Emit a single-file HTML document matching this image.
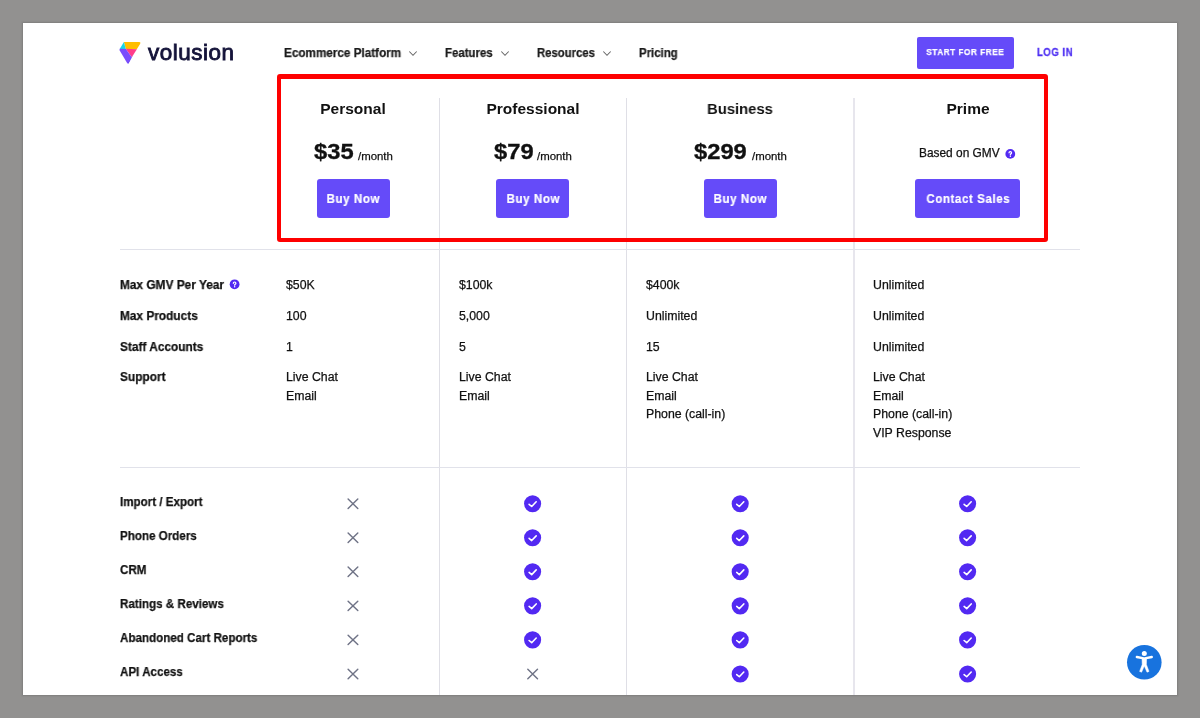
<!DOCTYPE html>
<html><head><meta charset="utf-8">
<style>
*{margin:0;padding:0;box-sizing:border-box}
html,body{width:1200px;height:718px;overflow:hidden;background:#929190;font-family:"Liberation Sans",sans-serif;color:#111}
.t{position:absolute;white-space:nowrap;will-change:transform;-webkit-text-stroke:0.25px currentColor}
.r{position:absolute}
svg.r{display:block;overflow:visible}
</style></head><body>
<div class="r" style="left:23px;top:23px;width:1154px;height:672px;background:#fff;box-shadow:0 0 1.5px 1px rgba(60,60,60,0.22);"></div>
<svg class="r" style="left:117px;top:39px" width="26" height="27" viewBox="117 39 26 27">
<path d="M123.9 41.9 L139.3 41.9 Q141 42.1 140.2 43.7 L136.8 49.3 L125.8 48.9 Z" fill="#ffbe00"/>
<path d="M123.9 41.9 L119.7 48.9 L125.8 48.9 Z" fill="#16d6e6"/>
<path d="M125.7 48.8 L136.9 49.2 L131.8 57.2 Z" fill="#ff3d8b"/>
<path d="M119.8 48.8 L125.9 48.9 L131.8 57.2 L128.7 62.9 Q127.9 64 127.1 62.9 L119.7 50.4 Q119.3 49.5 119.8 48.8 Z" fill="#7a4cfc"/>
<path d="M131.8 57.1 L132.9 55.4 L128.7 62.9 Q128.2 63.6 127.8 63.4 Z" fill="#5a3af2"/>
</svg>
<div class="t " style="left:147.6px;top:42.18px;font-size:22px;line-height:22px;font-weight:normal;color:#15143a;letter-spacing:0.5px;-webkit-text-stroke:0.85px #15143a;transform:scaleX(1.02);transform-origin:0 0;">volusion</div>
<div class="t " style="left:284.2px;top:46.67px;font-size:12.2px;line-height:12.2px;font-weight:bold;color:#1b1b1b;transform:scaleX(0.961);transform-origin:0 0;">Ecommerce Platform</div>
<svg class="r" style="left:409.2px;top:50.5px" width="8" height="5" viewBox="0 0 8 5"><path d="M0.3 0.5 L4 4.3 L7.7 0.5" fill="none" stroke="#666" stroke-width="1.05"/></svg>
<div class="t " style="left:445.2px;top:46.67px;font-size:12.2px;line-height:12.2px;font-weight:bold;color:#1b1b1b;transform:scaleX(0.938);transform-origin:0 0;">Features</div>
<svg class="r" style="left:501.2px;top:50.5px" width="8" height="5" viewBox="0 0 8 5"><path d="M0.3 0.5 L4 4.3 L7.7 0.5" fill="none" stroke="#666" stroke-width="1.05"/></svg>
<div class="t " style="left:537.3px;top:46.67px;font-size:12.2px;line-height:12.2px;font-weight:bold;color:#1b1b1b;transform:scaleX(0.930);transform-origin:0 0;">Resources</div>
<svg class="r" style="left:603.0px;top:50.5px" width="8" height="5" viewBox="0 0 8 5"><path d="M0.3 0.5 L4 4.3 L7.7 0.5" fill="none" stroke="#666" stroke-width="1.05"/></svg>
<div class="t " style="left:639.1px;top:46.67px;font-size:12.2px;line-height:12.2px;font-weight:bold;color:#1b1b1b;transform:scaleX(0.937);transform-origin:0 0;">Pricing</div>
<div class="r" style="left:916.5px;top:36.5px;width:97.5px;height:32px;background:#654bf9;border-radius:2px;"></div>
<div class="t " style="left:665.2px;width:600px;text-align:center;top:47.44px;font-size:9.4px;line-height:9.4px;font-weight:bold;color:#fff;letter-spacing:0.57px;text-indent:0.57px;-webkit-text-stroke:0.25px #fff;transform:scaleX(0.88);">START FOR FREE</div>
<div class="t " style="left:1037.0px;top:47.11px;font-size:10.5px;line-height:10.5px;font-weight:bold;color:#4e30f2;letter-spacing:0.66px;-webkit-text-stroke:0.3px #4e30f2;transform:scaleX(0.9);transform-origin:0 0;">LOG IN</div>
<div class="r" style="left:439px;top:98px;width:1px;height:597px;background:#dfdfe6;"></div>
<div class="r" style="left:626px;top:98px;width:1px;height:597px;background:#dfdfe6;"></div>
<div class="r" style="left:853px;top:98px;width:2px;height:597px;background:#e7e6ed;"></div>
<div class="r" style="left:120px;top:249px;width:960px;height:1px;background:#e1e2ea;"></div>
<div class="r" style="left:120px;top:467px;width:960px;height:1px;background:#e1e2ea;"></div>
<div class="t " style="left:53.39999999999998px;width:600px;text-align:center;top:100.78px;font-size:15.5px;line-height:15.5px;font-weight:bold;color:#111;-webkit-text-stroke:0;transform:scaleX(1.0);">Personal</div>
<div class="t " style="left:232.5px;width:600px;text-align:center;top:100.78px;font-size:15.5px;line-height:15.5px;font-weight:bold;color:#111;-webkit-text-stroke:0;transform:scaleX(1.0);">Professional</div>
<div class="t " style="left:440px;width:600px;text-align:center;top:100.78px;font-size:15.5px;line-height:15.5px;font-weight:bold;color:#111;-webkit-text-stroke:0;transform:scaleX(0.955);">Business</div>
<div class="t " style="left:667.5px;width:600px;text-align:center;top:100.78px;font-size:15.5px;line-height:15.5px;font-weight:bold;color:#111;-webkit-text-stroke:0;transform:scaleX(1.0);">Prime</div>
<div class="t " style="left:314.2px;top:141.15px;font-size:21.2px;line-height:21.2px;font-weight:bold;color:#111;transform:scaleX(1.12);transform-origin:0 0;-webkit-text-stroke:0.3px #111;">$35</div>
<div class="t " style="left:357.7px;top:151.05px;font-size:11.4px;line-height:11.4px;font-weight:normal;color:#111;">/month</div>
<div class="t " style="left:493.6px;top:141.15px;font-size:21.2px;line-height:21.2px;font-weight:bold;color:#111;transform:scaleX(1.12);transform-origin:0 0;-webkit-text-stroke:0.3px #111;">$79</div>
<div class="t " style="left:536.6999999999999px;top:151.05px;font-size:11.4px;line-height:11.4px;font-weight:normal;color:#111;">/month</div>
<div class="t " style="left:694.1px;top:141.15px;font-size:21.2px;line-height:21.2px;font-weight:bold;color:#111;transform:scaleX(1.12);transform-origin:0 0;-webkit-text-stroke:0.3px #111;">$299</div>
<div class="t " style="left:751.6999999999999px;top:151.05px;font-size:11.4px;line-height:11.4px;font-weight:normal;color:#111;">/month</div>
<div class="t " style="left:918.8000000000001px;top:147.93px;font-size:11.9px;line-height:11.9px;font-weight:normal;color:#111;">Based on GMV</div>
<div class="r" style="left:316.9px;top:179px;width:73px;height:39px;background:#654bf9;border-radius:3px;"></div>
<div class="t " style="left:53.39999999999998px;width:600px;text-align:center;top:193.12px;font-size:12.5px;line-height:12.5px;font-weight:bold;color:#fff;letter-spacing:0.65px;text-indent:0.65px;-webkit-text-stroke:0.2px #fff;transform:scaleX(0.92);">Buy Now</div>
<div class="r" style="left:496.0px;top:179px;width:73px;height:39px;background:#654bf9;border-radius:3px;"></div>
<div class="t " style="left:232.5px;width:600px;text-align:center;top:193.12px;font-size:12.5px;line-height:12.5px;font-weight:bold;color:#fff;letter-spacing:0.65px;text-indent:0.65px;-webkit-text-stroke:0.2px #fff;transform:scaleX(0.92);">Buy Now</div>
<div class="r" style="left:703.5px;top:179px;width:73px;height:39px;background:#654bf9;border-radius:3px;"></div>
<div class="t " style="left:440px;width:600px;text-align:center;top:193.12px;font-size:12.5px;line-height:12.5px;font-weight:bold;color:#fff;letter-spacing:0.65px;text-indent:0.65px;-webkit-text-stroke:0.2px #fff;transform:scaleX(0.92);">Buy Now</div>
<div class="r" style="left:915.0px;top:179px;width:105px;height:39px;background:#654bf9;border-radius:3px;"></div>
<div class="t " style="left:667.5px;width:600px;text-align:center;top:193.12px;font-size:12.5px;line-height:12.5px;font-weight:bold;color:#fff;letter-spacing:0.65px;text-indent:0.65px;-webkit-text-stroke:0.2px #fff;transform:scaleX(0.92);">Contact Sales</div>
<svg class="r" style="left:1003px;top:146px" width="14" height="14" viewBox="0 0 14 14"><g transform="translate(2.40,3.00) scale(0.490)"><circle cx="10" cy="10" r="10" fill="#5229f2"/><path d="M7.4 7.9 Q7.4 5.3 10 5.3 Q12.6 5.3 12.6 7.7 Q12.6 9.1 11.2 9.9 Q10.1 10.5 10.1 11.8" fill="none" stroke="#fff" stroke-width="2.5" stroke-linecap="round"/><circle cx="10.1" cy="14.9" r="1.5" fill="#fff"/></g></svg>
<div class="t " style="left:120.3px;top:278.65px;font-size:12.7px;line-height:12.7px;font-weight:bold;color:#111;transform:scaleX(0.935);transform-origin:0 0;">Max GMV Per Year</div>
<div class="t " style="left:286.3px;top:278.59px;font-size:12.3px;line-height:12.3px;font-weight:normal;color:#111;">$50K</div>
<div class="t " style="left:459.3px;top:278.59px;font-size:12.3px;line-height:12.3px;font-weight:normal;color:#111;">$100k</div>
<div class="t " style="left:646.3px;top:278.59px;font-size:12.3px;line-height:12.3px;font-weight:normal;color:#111;">$400k</div>
<div class="t " style="left:873.3px;top:278.59px;font-size:12.3px;line-height:12.3px;font-weight:normal;color:#111;">Unlimited</div>
<div class="t " style="left:120.3px;top:309.65px;font-size:12.7px;line-height:12.7px;font-weight:bold;color:#111;transform:scaleX(0.935);transform-origin:0 0;">Max Products</div>
<div class="t " style="left:286.3px;top:309.59px;font-size:12.3px;line-height:12.3px;font-weight:normal;color:#111;">100</div>
<div class="t " style="left:459.3px;top:309.59px;font-size:12.3px;line-height:12.3px;font-weight:normal;color:#111;">5,000</div>
<div class="t " style="left:646.3px;top:309.59px;font-size:12.3px;line-height:12.3px;font-weight:normal;color:#111;">Unlimited</div>
<div class="t " style="left:873.3px;top:309.59px;font-size:12.3px;line-height:12.3px;font-weight:normal;color:#111;">Unlimited</div>
<div class="t " style="left:120.3px;top:340.65px;font-size:12.7px;line-height:12.7px;font-weight:bold;color:#111;transform:scaleX(0.935);transform-origin:0 0;">Staff Accounts</div>
<div class="t " style="left:286.3px;top:340.59px;font-size:12.3px;line-height:12.3px;font-weight:normal;color:#111;">1</div>
<div class="t " style="left:459.3px;top:340.59px;font-size:12.3px;line-height:12.3px;font-weight:normal;color:#111;">5</div>
<div class="t " style="left:646.3px;top:340.59px;font-size:12.3px;line-height:12.3px;font-weight:normal;color:#111;">15</div>
<div class="t " style="left:873.3px;top:340.59px;font-size:12.3px;line-height:12.3px;font-weight:normal;color:#111;">Unlimited</div>
<div class="t " style="left:120.3px;top:371.15px;font-size:12.7px;line-height:12.7px;font-weight:bold;color:#111;transform:scaleX(0.935);transform-origin:0 0;">Support</div>
<div class="t " style="left:286.3px;top:371.09px;font-size:12.3px;line-height:12.3px;font-weight:normal;color:#111;">Live Chat</div>
<div class="t " style="left:286.3px;top:389.59px;font-size:12.3px;line-height:12.3px;font-weight:normal;color:#111;">Email</div>
<div class="t " style="left:459.3px;top:371.09px;font-size:12.3px;line-height:12.3px;font-weight:normal;color:#111;">Live Chat</div>
<div class="t " style="left:459.3px;top:389.59px;font-size:12.3px;line-height:12.3px;font-weight:normal;color:#111;">Email</div>
<div class="t " style="left:646.3px;top:371.09px;font-size:12.3px;line-height:12.3px;font-weight:normal;color:#111;">Live Chat</div>
<div class="t " style="left:646.3px;top:389.59px;font-size:12.3px;line-height:12.3px;font-weight:normal;color:#111;">Email</div>
<div class="t " style="left:646.3px;top:408.09px;font-size:12.3px;line-height:12.3px;font-weight:normal;color:#111;">Phone (call-in)</div>
<div class="t " style="left:873.3px;top:371.09px;font-size:12.3px;line-height:12.3px;font-weight:normal;color:#111;">Live Chat</div>
<div class="t " style="left:873.3px;top:389.59px;font-size:12.3px;line-height:12.3px;font-weight:normal;color:#111;">Email</div>
<div class="t " style="left:873.3px;top:408.09px;font-size:12.3px;line-height:12.3px;font-weight:normal;color:#111;">Phone (call-in)</div>
<div class="t " style="left:873.3px;top:426.59px;font-size:12.3px;line-height:12.3px;font-weight:normal;color:#111;">VIP Response</div>
<svg class="r" style="left:227px;top:277px" width="14" height="14" viewBox="0 0 14 14"><g transform="translate(2.70,2.40) scale(0.490)"><circle cx="10" cy="10" r="10" fill="#5229f2"/><path d="M7.4 7.9 Q7.4 5.3 10 5.3 Q12.6 5.3 12.6 7.7 Q12.6 9.1 11.2 9.9 Q10.1 10.5 10.1 11.8" fill="none" stroke="#fff" stroke-width="2.5" stroke-linecap="round"/><circle cx="10.1" cy="14.9" r="1.5" fill="#fff"/></g></svg>
<div class="t " style="left:120.3px;top:495.65px;font-size:12.7px;line-height:12.7px;font-weight:bold;color:#111;transform:scaleX(0.915);transform-origin:0 0;">Import / Export</div>
<svg class="r" style="left:344px;top:495px" width="16" height="16" viewBox="0 0 16 16"><g transform="translate(2.90,2.70)"><path d="M1.2 1.3 L10.9 10.7 M10.9 1.3 L1.2 10.7" stroke="#6f7386" stroke-width="1.45" stroke-linecap="round"/></g></svg>
<svg class="r" style="left:522px;top:493px" width="20" height="20" viewBox="0 0 20 20"><g transform="translate(2.10,2.20)"><circle cx="8.5" cy="8.5" r="8.55" fill="#5229f2"/><path d="M5.0 9.1 L7.6 11.3 L12.1 6.6" fill="none" stroke="#fff" stroke-width="1.6" stroke-linecap="round" stroke-linejoin="round"/></g></svg>
<svg class="r" style="left:730px;top:493px" width="20" height="20" viewBox="0 0 20 20"><g transform="translate(1.70,2.20)"><circle cx="8.5" cy="8.5" r="8.55" fill="#5229f2"/><path d="M5.0 9.1 L7.6 11.3 L12.1 6.6" fill="none" stroke="#fff" stroke-width="1.6" stroke-linecap="round" stroke-linejoin="round"/></g></svg>
<svg class="r" style="left:957px;top:493px" width="20" height="20" viewBox="0 0 20 20"><g transform="translate(2.10,2.20)"><circle cx="8.5" cy="8.5" r="8.55" fill="#5229f2"/><path d="M5.0 9.1 L7.6 11.3 L12.1 6.6" fill="none" stroke="#fff" stroke-width="1.6" stroke-linecap="round" stroke-linejoin="round"/></g></svg>
<div class="t " style="left:120.3px;top:529.75px;font-size:12.7px;line-height:12.7px;font-weight:bold;color:#111;transform:scaleX(0.915);transform-origin:0 0;">Phone Orders</div>
<svg class="r" style="left:344px;top:529px" width="16" height="16" viewBox="0 0 16 16"><g transform="translate(2.90,2.75)"><path d="M1.2 1.3 L10.9 10.7 M10.9 1.3 L1.2 10.7" stroke="#6f7386" stroke-width="1.45" stroke-linecap="round"/></g></svg>
<svg class="r" style="left:522px;top:527px" width="20" height="20" viewBox="0 0 20 20"><g transform="translate(2.10,2.25)"><circle cx="8.5" cy="8.5" r="8.55" fill="#5229f2"/><path d="M5.0 9.1 L7.6 11.3 L12.1 6.6" fill="none" stroke="#fff" stroke-width="1.6" stroke-linecap="round" stroke-linejoin="round"/></g></svg>
<svg class="r" style="left:730px;top:527px" width="20" height="20" viewBox="0 0 20 20"><g transform="translate(1.70,2.25)"><circle cx="8.5" cy="8.5" r="8.55" fill="#5229f2"/><path d="M5.0 9.1 L7.6 11.3 L12.1 6.6" fill="none" stroke="#fff" stroke-width="1.6" stroke-linecap="round" stroke-linejoin="round"/></g></svg>
<svg class="r" style="left:957px;top:527px" width="20" height="20" viewBox="0 0 20 20"><g transform="translate(2.10,2.25)"><circle cx="8.5" cy="8.5" r="8.55" fill="#5229f2"/><path d="M5.0 9.1 L7.6 11.3 L12.1 6.6" fill="none" stroke="#fff" stroke-width="1.6" stroke-linecap="round" stroke-linejoin="round"/></g></svg>
<div class="t " style="left:120.3px;top:563.85px;font-size:12.7px;line-height:12.7px;font-weight:bold;color:#111;transform:scaleX(0.915);transform-origin:0 0;">CRM</div>
<svg class="r" style="left:344px;top:563px" width="16" height="16" viewBox="0 0 16 16"><g transform="translate(2.90,2.80)"><path d="M1.2 1.3 L10.9 10.7 M10.9 1.3 L1.2 10.7" stroke="#6f7386" stroke-width="1.45" stroke-linecap="round"/></g></svg>
<svg class="r" style="left:522px;top:561px" width="20" height="20" viewBox="0 0 20 20"><g transform="translate(2.10,2.30)"><circle cx="8.5" cy="8.5" r="8.55" fill="#5229f2"/><path d="M5.0 9.1 L7.6 11.3 L12.1 6.6" fill="none" stroke="#fff" stroke-width="1.6" stroke-linecap="round" stroke-linejoin="round"/></g></svg>
<svg class="r" style="left:730px;top:561px" width="20" height="20" viewBox="0 0 20 20"><g transform="translate(1.70,2.30)"><circle cx="8.5" cy="8.5" r="8.55" fill="#5229f2"/><path d="M5.0 9.1 L7.6 11.3 L12.1 6.6" fill="none" stroke="#fff" stroke-width="1.6" stroke-linecap="round" stroke-linejoin="round"/></g></svg>
<svg class="r" style="left:957px;top:561px" width="20" height="20" viewBox="0 0 20 20"><g transform="translate(2.10,2.30)"><circle cx="8.5" cy="8.5" r="8.55" fill="#5229f2"/><path d="M5.0 9.1 L7.6 11.3 L12.1 6.6" fill="none" stroke="#fff" stroke-width="1.6" stroke-linecap="round" stroke-linejoin="round"/></g></svg>
<div class="t " style="left:120.3px;top:597.95px;font-size:12.7px;line-height:12.7px;font-weight:bold;color:#111;transform:scaleX(0.915);transform-origin:0 0;">Ratings & Reviews</div>
<svg class="r" style="left:344px;top:597px" width="16" height="16" viewBox="0 0 16 16"><g transform="translate(2.90,2.85)"><path d="M1.2 1.3 L10.9 10.7 M10.9 1.3 L1.2 10.7" stroke="#6f7386" stroke-width="1.45" stroke-linecap="round"/></g></svg>
<svg class="r" style="left:522px;top:595px" width="20" height="20" viewBox="0 0 20 20"><g transform="translate(2.10,2.35)"><circle cx="8.5" cy="8.5" r="8.55" fill="#5229f2"/><path d="M5.0 9.1 L7.6 11.3 L12.1 6.6" fill="none" stroke="#fff" stroke-width="1.6" stroke-linecap="round" stroke-linejoin="round"/></g></svg>
<svg class="r" style="left:730px;top:595px" width="20" height="20" viewBox="0 0 20 20"><g transform="translate(1.70,2.35)"><circle cx="8.5" cy="8.5" r="8.55" fill="#5229f2"/><path d="M5.0 9.1 L7.6 11.3 L12.1 6.6" fill="none" stroke="#fff" stroke-width="1.6" stroke-linecap="round" stroke-linejoin="round"/></g></svg>
<svg class="r" style="left:957px;top:595px" width="20" height="20" viewBox="0 0 20 20"><g transform="translate(2.10,2.35)"><circle cx="8.5" cy="8.5" r="8.55" fill="#5229f2"/><path d="M5.0 9.1 L7.6 11.3 L12.1 6.6" fill="none" stroke="#fff" stroke-width="1.6" stroke-linecap="round" stroke-linejoin="round"/></g></svg>
<div class="t " style="left:120.3px;top:632.05px;font-size:12.7px;line-height:12.7px;font-weight:bold;color:#111;transform:scaleX(0.915);transform-origin:0 0;">Abandoned Cart Reports</div>
<svg class="r" style="left:344px;top:631px" width="16" height="16" viewBox="0 0 16 16"><g transform="translate(2.90,2.90)"><path d="M1.2 1.3 L10.9 10.7 M10.9 1.3 L1.2 10.7" stroke="#6f7386" stroke-width="1.45" stroke-linecap="round"/></g></svg>
<svg class="r" style="left:522px;top:629px" width="20" height="20" viewBox="0 0 20 20"><g transform="translate(2.10,2.40)"><circle cx="8.5" cy="8.5" r="8.55" fill="#5229f2"/><path d="M5.0 9.1 L7.6 11.3 L12.1 6.6" fill="none" stroke="#fff" stroke-width="1.6" stroke-linecap="round" stroke-linejoin="round"/></g></svg>
<svg class="r" style="left:730px;top:629px" width="20" height="20" viewBox="0 0 20 20"><g transform="translate(1.70,2.40)"><circle cx="8.5" cy="8.5" r="8.55" fill="#5229f2"/><path d="M5.0 9.1 L7.6 11.3 L12.1 6.6" fill="none" stroke="#fff" stroke-width="1.6" stroke-linecap="round" stroke-linejoin="round"/></g></svg>
<svg class="r" style="left:957px;top:629px" width="20" height="20" viewBox="0 0 20 20"><g transform="translate(2.10,2.40)"><circle cx="8.5" cy="8.5" r="8.55" fill="#5229f2"/><path d="M5.0 9.1 L7.6 11.3 L12.1 6.6" fill="none" stroke="#fff" stroke-width="1.6" stroke-linecap="round" stroke-linejoin="round"/></g></svg>
<div class="t " style="left:120.3px;top:666.15px;font-size:12.7px;line-height:12.7px;font-weight:bold;color:#111;transform:scaleX(0.915);transform-origin:0 0;">API Access</div>
<svg class="r" style="left:344px;top:665px" width="16" height="16" viewBox="0 0 16 16"><g transform="translate(2.90,2.95)"><path d="M1.2 1.3 L10.9 10.7 M10.9 1.3 L1.2 10.7" stroke="#6f7386" stroke-width="1.45" stroke-linecap="round"/></g></svg>
<svg class="r" style="left:524px;top:665px" width="16" height="16" viewBox="0 0 16 16"><g transform="translate(2.60,2.95)"><path d="M1.2 1.3 L10.9 10.7 M10.9 1.3 L1.2 10.7" stroke="#6f7386" stroke-width="1.45" stroke-linecap="round"/></g></svg>
<svg class="r" style="left:730px;top:663px" width="20" height="20" viewBox="0 0 20 20"><g transform="translate(1.70,2.45)"><circle cx="8.5" cy="8.5" r="8.55" fill="#5229f2"/><path d="M5.0 9.1 L7.6 11.3 L12.1 6.6" fill="none" stroke="#fff" stroke-width="1.6" stroke-linecap="round" stroke-linejoin="round"/></g></svg>
<svg class="r" style="left:957px;top:663px" width="20" height="20" viewBox="0 0 20 20"><g transform="translate(2.10,2.45)"><circle cx="8.5" cy="8.5" r="8.55" fill="#5229f2"/><path d="M5.0 9.1 L7.6 11.3 L12.1 6.6" fill="none" stroke="#fff" stroke-width="1.6" stroke-linecap="round" stroke-linejoin="round"/></g></svg>
<svg class="r" style="left:1127.0px;top:645.1px" width="35" height="35" viewBox="0 0 35 35"><circle cx="17.3" cy="17.3" r="17.3" fill="#1873de"/>
<circle cx="17.3" cy="8.6" r="2.5" fill="#fff"/>
<path d="M9.8 12.0 L15.6 13.2 M24.8 12.0 L19.0 13.2" stroke="#fff" stroke-width="2.3" stroke-linecap="round"/>
<path d="M15.0 12.6 L19.6 12.6 L19.4 19.6 L22.0 26.4 L20.0 27.2 L17.3 21.0 L14.6 27.2 L12.6 26.4 L15.2 19.6 Z" fill="#fff" stroke="#fff" stroke-width="0.5" stroke-linejoin="round"/>
</svg>
<div class="r" style="left:277px;top:74px;width:771px;height:168px;border:4px solid #fe0000;border-top-width:5px;border-radius:3px;"></div>
</body></html>
